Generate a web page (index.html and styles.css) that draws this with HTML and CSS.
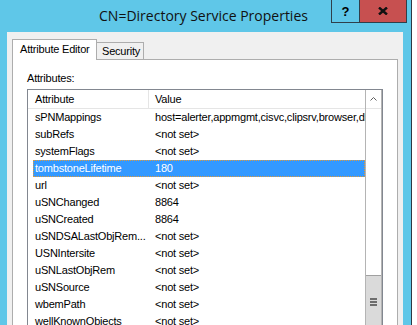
FILE: index.html
```html
<!DOCTYPE html>
<html lang="en">
<head>
  <meta charset="UTF-8">
  <title>CN=Directory Service Properties</title>
  <link rel="stylesheet" href="styles.css">
</head>
<body>
  <div class="window">
    <div class="titlebar">
      <div class="title">CN=Directory Service Properties</div>
      <div class="caption-buttons">
        <div class="cap-btn help">?</div>
        <div class="cap-btn close">
          <svg width="10" height="8" viewBox="0 0 10 8"><path d="M1 0.5 L9 7.5 M9 0.5 L1 7.5" stroke="#111" stroke-width="2.4" fill="none"/></svg>
        </div>
      </div>
    </div>

    <div class="client">
      <div class="tabs">
        <div class="tab active">Attribute Editor</div>
        <div class="tab">Security</div>
      </div>

      <div class="panel">
        <div class="label">Attributes:</div>

        <div class="listview">
          <div class="list">
            <div class="header">
              <div class="hcol first">Attribute</div>
              <div class="hcol">Value</div>
            </div>
            <div class="rows">
              <div class="row"><span class="c1">sPNMappings</span><span class="c2">host=alerter,appmgmt,cisvc,clipsrv,browser,dhcp,dnscache,replicator,eventlog</span></div>
              <div class="row"><span class="c1">subRefs</span><span class="c2">&lt;not set&gt;</span></div>
              <div class="row"><span class="c1">systemFlags</span><span class="c2">&lt;not set&gt;</span></div>
              <div class="row sel"><span class="c1">tombstoneLifetime</span><span class="c2">180</span></div>
              <div class="row"><span class="c1">url</span><span class="c2">&lt;not set&gt;</span></div>
              <div class="row"><span class="c1">uSNChanged</span><span class="c2">8864</span></div>
              <div class="row"><span class="c1">uSNCreated</span><span class="c2">8864</span></div>
              <div class="row"><span class="c1">uSNDSALastObjRem...</span><span class="c2">&lt;not set&gt;</span></div>
              <div class="row"><span class="c1">USNIntersite</span><span class="c2">&lt;not set&gt;</span></div>
              <div class="row"><span class="c1">uSNLastObjRem</span><span class="c2">&lt;not set&gt;</span></div>
              <div class="row"><span class="c1">uSNSource</span><span class="c2">&lt;not set&gt;</span></div>
              <div class="row"><span class="c1">wbemPath</span><span class="c2">&lt;not set&gt;</span></div>
              <div class="row"><span class="c1">wellKnownObjects</span><span class="c2">&lt;not set&gt;</span></div>
            </div>
          </div>

          <div class="vscroll">
            <div class="sb-arrow">
              <svg width="7" height="4" viewBox="0 0 7 4"><path d="M0.5 3.5 L3.5 0.5 L6.5 3.5" stroke="#606060" stroke-width="1" fill="none"/></svg>
            </div>
            <div class="sb-track"></div>
            <div class="sb-thumb">
              <span class="grip"></span>
              <span class="grip"></span>
              <span class="grip"></span>
            </div>
          </div>
        </div>
      </div>
    </div>
  </div>
</body>
</html>
```

FILE: styles.css
```css
html, body {
  margin: 0;
  height: 325px;
  overflow: hidden;
  background: #fff;
}

body {
  font-family: "Liberation Sans", Arial, sans-serif;
  font-size: 11px;
  letter-spacing: -0.2px;
  color: #000;
}

.window {
  width: 411px;
  height: 325px;
  background: #5fc7e8;
  border-right: 1px solid #2d3b44;
  display: flex;
  flex-direction: column;
}

/* title bar */
.titlebar {
  height: 32px;
  display: grid;
  grid-template-columns: 1fr auto;
}

.title {
  grid-area: 1 / 1 / 2 / 3;
  text-align: center;
  font-family: "Open Sans", "Noto Sans", sans-serif;
  font-size: 14px;
  letter-spacing: 0;
  line-height: 32px;
  padding-right: 4px;
  color: #111;
}

.caption-buttons {
  grid-area: 1 / 2 / 2 / 3;
  align-self: start;
  display: flex;
  margin-right: 4px;
}

.cap-btn {
  box-sizing: border-box;
  height: 23px;
  border: 1px solid #2f3f4a;
  border-top: none;
  display: flex;
  align-items: center;
  justify-content: center;
}

.help {
  width: 28px;
  border-right: none;
  font-weight: bold;
  font-size: 13px;
  letter-spacing: 0;
}

.close {
  width: 48px;
  background: #c75050;
}

/* dialog body */
.client {
  margin-left: 7px;
  width: 396px;
  flex: 1;
  box-sizing: border-box;
  background: #f0f0f0;
  padding: 7px 5px 0 5px;
}

.tabs {
  display: flex;
  align-items: flex-end;
  height: 20px;
  position: relative;
  z-index: 1;
}

.tab {
  box-sizing: border-box;
  height: 17px;
  width: 48px;
  margin-left: -1px;
  border: 1px solid #adadad;
  border-bottom: none;
  background: #f0f0f0;
  padding-left: 5px;
  line-height: 16px;
  white-space: nowrap;
}

.tab.active {
  height: 21px;
  width: 85px;
  margin-left: 0;
  margin-bottom: -1px;
  background: #fff;
  padding-left: 7px;
  line-height: 19px;
  position: relative;
  z-index: 2;
}

.panel {
  border: 1px solid #adadad;
  background: #fff;
  padding: 12px 14px 0 14px;
  height: 400px;
}

.label {
  line-height: 13px;
  margin-bottom: 4px;
}

/* list view */
.listview {
  display: flex;
  border: 1px solid #828790;
  height: 380px;
}

.list {
  flex: 1;
  overflow: hidden;
}

.header {
  display: flex;
  height: 18px;
  line-height: 18px;
  border-bottom: 1px solid #e5e5e5;
}

.hcol {
  padding-left: 6px;
}

.hcol.first {
  box-sizing: border-box;
  width: 121px;
  padding-left: 7px;
  border-right: 1px solid #e5e5e5;
}

.rows {
  padding-left: 5px;
}

.row {
  display: flex;
  height: 17px;
  line-height: 17px;
  white-space: nowrap;
}

.c1 {
  box-sizing: border-box;
  width: 120px;
  padding-left: 2px;
  overflow: hidden;
}

.c2 {
  flex: 1;
  padding-left: 2px;
  overflow: hidden;
}

.row.sel {
  background: #3399ff;
  color: #fff;
  outline: 1px dotted #e09a3a;
  outline-offset: -1px;
}

/* scrollbar */
.vscroll {
  box-sizing: border-box;
  width: 17px;
  border-left: 1px solid #b4b4b4;
  border-right: 1px solid #b4b4b4;
  display: flex;
  flex-direction: column;
}

.sb-arrow {
  height: 18px;
  border-bottom: 1px solid #e5e5e5;
  display: flex;
  align-items: center;
  justify-content: center;
}

.sb-track {
  height: 166px;
}

.sb-thumb {
  height: 52px;
  background: #dadada;
  border-top: 1px solid #a0a0a0;
  display: flex;
  flex-direction: column;
  align-items: center;
  justify-content: center;
  gap: 1px;
}

.grip {
  width: 7px;
  height: 2px;
  background: #6d6d6d;
}
```
